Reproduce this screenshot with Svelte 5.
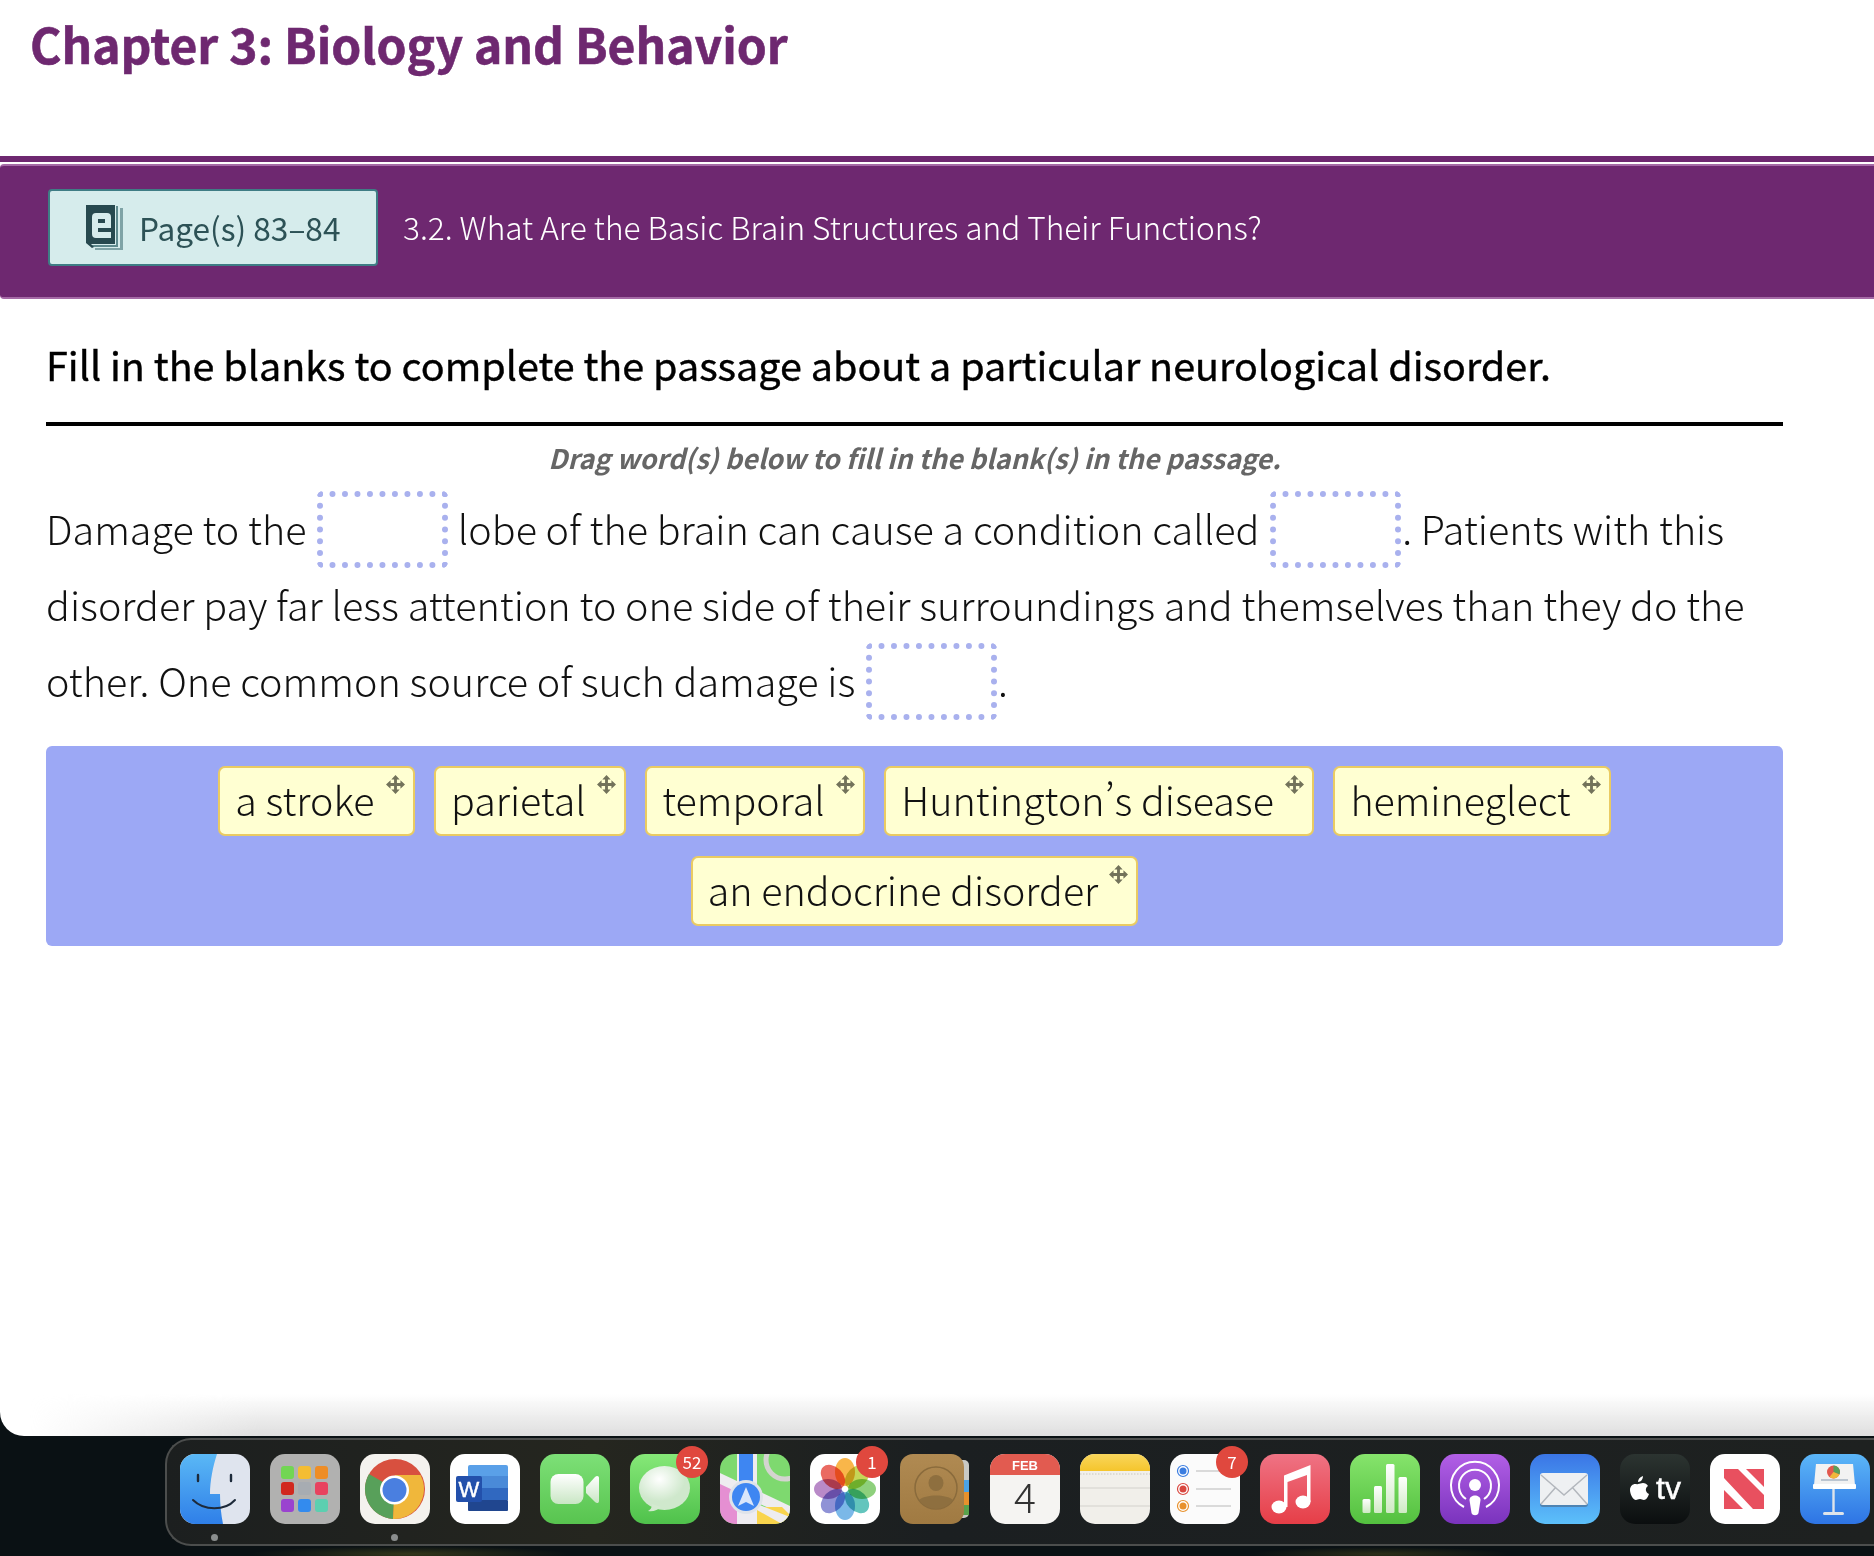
<script>
  const chips = [
    'a stroke',
    'parietal',
    'temporal',
    'Huntington’s disease',
    'hemineglect',
    'an endocrine disorder'
  ]
</script>

{#snippet move()}
  <svg class="move" viewBox="0 0 20 20" aria-hidden="true">
    <path d="M10 0l4.400 4.800h-2.900V8.500h3.700V5.600L20 10l-4.800 4.400v-2.900h-3.700v3.700h2.900L10 20l-4.400-4.800h2.900v-3.700H4.800v2.900L0 10l4.800-4.400v2.900h3.700V4.800H5.600z" />
  </svg>
{/snippet}

<div class="window">
  <h1>Chapter 3: Biology and Behavior</h1>
  <div class="rule"></div>
  <div class="banner">
    <div class="pages">
      <svg class="book" viewBox="0 0 37 46" aria-hidden="true">
        <path d="M30 1h2v41H6v-2h24z" fill="#5f8a8e" />
        <path d="M34 3h3v42H9v-2h25z" fill="#7fa3a6" />
        <path d="M0 0h29v39H5l3 3-2 1-6-5z" fill="#27494f" />
        <path fill-rule="evenodd" d="M6 12a4 4 0 0 1 4-4h11a4 4 0 0 1 4 4v11H12v4h13v6H10a4 4 0 0 1-4-4zM12 14v4h7v-4z" fill="#d6ecec" />
      </svg>
      <span>Page(s) 83–84</span>
    </div>
    <span class="section">3.2. What Are the Basic Brain Structures and Their Functions?</span>
  </div>

  <div class="content">
    <h2>Fill in the blanks to complete the passage about a particular neurological disorder.</h2>
    <p class="hint">Drag word(s) below to fill in the blank(s) in the passage.</p>
    <p class="passage">Damage to the <span class="blank"></span> lobe of the brain can cause a condition called <span class="blank"></span>. Patients with this disorder pay far less attention to one side of their surroundings and themselves than they do the other. One common source of such damage is <span class="blank"></span>.</p>
    <div class="pool">
      {#each chips as chip}
        <div class="chip"><span>{chip}</span>{@render move()}</div>
      {/each}
    </div>
  </div>
</div>

<div class="dock">
  <div class="app">
    <svg viewBox="0 0 70 70">
      <defs>
        <linearGradient id="fb" x1="0" y1="0" x2="0" y2="1"><stop offset="0" stop-color="#5ab8f6" /><stop offset="1" stop-color="#2f7fe8" /></linearGradient>
      </defs>
      <rect width="70" height="70" rx="15" fill="#dfe4ee" />
      <path d="M15 0h22c-4 12-7 27-7 40h10c0 10 1 20 3 30H15C7 70 0 63 0 55V15C0 7 7 0 15 0z" fill="url(#fb)" />
      <path d="M18 21v6M51 21v6" stroke="#1d2a3a" stroke-width="2.400" stroke-linecap="round" />
      <path d="M13 46c11 11 32 11 42 0" fill="none" stroke="#1d2a3a" stroke-width="2" stroke-linecap="round" />
    </svg>
  </div>
  <div class="app">
    <svg viewBox="0 0 70 70">
      <rect width="70" height="70" rx="15" fill="#b1b1b0" />
      <rect x="11" y="12" width="13" height="13" rx="3" fill="#72d653" />
      <rect x="28" y="12" width="13" height="13" rx="3" fill="#f4bd32" />
      <rect x="45" y="12" width="13" height="13" rx="3" fill="#ee8d26" />
      <rect x="11" y="28" width="13" height="13" rx="3" fill="#d1291f" />
      <rect x="28" y="28" width="13" height="13" rx="3" fill="#a7acb2" />
      <rect x="45" y="28" width="13" height="13" rx="3" fill="#e8425f" />
      <rect x="11" y="45" width="13" height="13" rx="3" fill="#9a43cf" />
      <rect x="28" y="45" width="13" height="13" rx="3" fill="#338bee" />
      <rect x="45" y="45" width="13" height="13" rx="3" fill="#5ccfb0" />
    </svg>
  </div>
  <div class="app">
    <svg viewBox="0 0 70 70">
      <rect width="70" height="70" rx="15" fill="#f4f2ee" />
      <circle cx="35" cy="35" r="30" fill="#d8503f" />
      <path d="M35 35L9 20A30 30 0 0 0 33 65z" fill="#58a05a" />
      <path d="M35 21h25.500A30 30 0 0 1 33 65z" fill="#f0b73b" />
      <circle cx="34.500" cy="36" r="14.500" fill="#fff" />
      <circle cx="34.500" cy="36" r="12" fill="#4a7fe0" />
    </svg>
  </div>
  <div class="app">
    <svg viewBox="0 0 70 70">
      <rect width="70" height="70" rx="15" fill="#fff" />
      <rect x="18" y="11" width="40" height="13" rx="2" fill="#5aa0e8" />
      <rect x="18" y="22" width="40" height="12" fill="#4a8ad8" />
      <rect x="18" y="34" width="40" height="12" fill="#3068c0" />
      <rect x="18" y="46" width="40" height="11" rx="1" fill="#20468f" />
      <rect x="6" y="22" width="26" height="26" rx="2" fill="#2350ab" />
      <text x="19" y="43" text-anchor="middle" class="w">W</text>
    </svg>
  </div>
  <div class="app">
    <svg viewBox="0 0 70 70">
      <defs>
        <linearGradient id="fg" x1="0" y1="0" x2="0" y2="1"><stop offset="0" stop-color="#7de077" /><stop offset="1" stop-color="#58c44f" /></linearGradient>
        <linearGradient id="fw" x1="0" y1="0" x2="0" y2="1"><stop offset="0" stop-color="#fff" /><stop offset="1" stop-color="#c9e6c4" /></linearGradient>
      </defs>
      <rect width="70" height="70" rx="15" fill="url(#fg)" />
      <rect x="10.500" y="20" width="33" height="30" rx="8" fill="url(#fw)" />
      <path d="M46 33l9-10c2-2 4-1 4 1v23c0 2-2 3-4 1l-9-9z" fill="url(#fw)" />
    </svg>
  </div>
  <div class="app">
    <svg viewBox="0 0 70 70">
      <defs>
        <linearGradient id="mg" x1="0" y1="0" x2="0" y2="1"><stop offset="0" stop-color="#86e878" /><stop offset="1" stop-color="#4fc14b" /></linearGradient>
        <radialGradient id="mw" cx="0.4" cy="0.3"><stop offset="0" stop-color="#fff" /><stop offset="1" stop-color="#cfe8cc" /></radialGradient>
      </defs>
      <rect width="70" height="70" rx="15" fill="url(#mg)" />
      <ellipse cx="34.500" cy="34" rx="25.500" ry="22" fill="url(#mw)" />
      <path d="M22 50c0 4-2 6-4 7 5 1 10-1 13-4z" fill="#d4ead0" />
    </svg>
    <b class="badge">52</b>
  </div>
  <div class="app">
    <svg viewBox="0 0 70 70">
      <defs><clipPath id="mc"><rect width="70" height="70" rx="15" /></clipPath></defs>
      <g clip-path="url(#mc)">
        <rect width="70" height="70" fill="#7ed96f" />
        <path d="M0 19L70 52V63L0 33z" fill="#eeecf0" />
        <path d="M0 30l17 8v32H0z" fill="#e58fd2" />
        <path d="M37 53h25l8 8v9H37z" fill="#f9d44d" />
        <path d="M37 50L70 63V70H62L37 56z" fill="#eeecf0" />
        <rect x="17" y="0" width="20" height="70" fill="#eeecf0" />
        <rect x="19" y="0" width="14" height="32" fill="#3e86f2" />
        <circle cx="65" cy="6" r="19" fill="none" stroke="#d4d4d0" stroke-width="5" />
        <circle cx="26" cy="43" r="17" fill="#dfe3ea" />
        <circle cx="26" cy="43" r="14" fill="#3e86f2" />
        <path d="M26 33l8 19-8-4-8 4z" fill="#d9e6fb" />
      </g>
    </svg>
  </div>
  <div class="app">
    <svg viewBox="0 0 70 70">
      <rect width="70" height="70" rx="15" fill="#fff" />
      <g transform="translate(35 35)">
        <ellipse class="petal" cy="-17" rx="10" ry="14" fill="#f9b64a" />
        <ellipse class="petal" cy="-17" rx="10" ry="14" fill="#c6d658" transform="rotate(45)" />
        <ellipse class="petal" cy="-17" rx="10" ry="14" fill="#8ed07c" transform="rotate(90)" />
        <ellipse class="petal" cy="-17" rx="10" ry="14" fill="#63c5bd" transform="rotate(135)" />
        <ellipse class="petal" cy="-17" rx="10" ry="14" fill="#7bb8e8" transform="rotate(180)" />
        <ellipse class="petal" cy="-17" rx="10" ry="14" fill="#8f92d6" transform="rotate(225)" />
        <ellipse class="petal" cy="-17" rx="10" ry="14" fill="#b98ac8" transform="rotate(270)" />
        <ellipse class="petal" cy="-17" rx="10" ry="14" fill="#ea6a62" transform="rotate(315)" />
        <circle r="1.200" fill="#fff" />
      </g>
    </svg>
    <b class="badge">1</b>
  </div>
  <div class="app">
    <svg viewBox="0 0 70 70">
      <defs>
        <linearGradient id="cb" x1="0" y1="0" x2="0" y2="1"><stop offset="0" stop-color="#b08a52" /><stop offset="1" stop-color="#a07a42" /></linearGradient>
      </defs>
      <rect x="50" y="6" width="19" height="58" rx="5" fill="#c9c9c4" />
      <rect x="63" y="26" width="6" height="12" fill="#4aa3e6" />
      <rect x="63" y="38" width="6" height="13" fill="#e8912c" />
      <rect x="63" y="51" width="6" height="10" fill="#5aa24c" />
      <rect width="64" height="70" rx="13" fill="url(#cb)" />
      <circle cx="36" cy="34" r="21" fill="none" stroke="#8a6b3c" stroke-width="1.500" />
      <ellipse cx="36" cy="29" rx="7.500" ry="8" fill="#8e6f3f" />
      <path d="M19 46c6-6 28-6 34 0a21 21 0 0 1-34 0z" fill="#8e6f3f" />
    </svg>
  </div>
  <div class="app">
    <svg viewBox="0 0 70 70">
      <defs><clipPath id="cc"><rect width="70" height="70" rx="15" /></clipPath></defs>
      <g clip-path="url(#cc)">
        <rect width="70" height="70" fill="#f5f4f2" />
        <rect width="70" height="21" fill="#e25b50" />
      </g>
      <text x="35" y="16" text-anchor="middle" class="feb">FEB</text>
      <text x="35" y="59" text-anchor="middle" class="day">4</text>
    </svg>
  </div>
  <div class="app">
    <svg viewBox="0 0 70 70">
      <defs>
        <clipPath id="nc"><rect width="70" height="70" rx="15" /></clipPath>
        <linearGradient id="ny" x1="0" y1="0" x2="0" y2="1"><stop offset="0" stop-color="#f9d65c" /><stop offset="1" stop-color="#f5c52c" /></linearGradient>
      </defs>
      <g clip-path="url(#nc)">
        <rect width="70" height="70" fill="#f1efea" />
        <rect width="70" height="17" fill="url(#ny)" />
        <path d="M0 20h70" stroke="#c9c7c0" stroke-dasharray="1.500 1.500" />
        <path d="M0 34h70M0 52h70" stroke="#d3d1cc" />
      </g>
    </svg>
  </div>
  <div class="app">
    <svg viewBox="0 0 70 70">
      <rect width="70" height="70" rx="15" fill="#fbfbfb" />
      <circle cx="13" cy="17" r="5.500" fill="#fff" stroke="#3b7de0" stroke-width="1.200" />
      <circle cx="13" cy="17" r="3.500" fill="#3b7de0" />
      <circle cx="13" cy="35" r="5.500" fill="#fff" stroke="#d9473f" stroke-width="1.200" />
      <circle cx="13" cy="35" r="3.500" fill="#d9473f" />
      <circle cx="13" cy="52" r="5.500" fill="#fff" stroke="#e8912c" stroke-width="1.200" />
      <circle cx="13" cy="52" r="3.500" fill="#e8912c" />
      <path d="M26 17h35M26 35h35M26 52h35" stroke="#b9b9b9" stroke-width="1.200" />
    </svg>
    <b class="badge">7</b>
  </div>
  <div class="app">
    <svg viewBox="0 0 70 70">
      <defs><linearGradient id="mu" x1="0" y1="0" x2="0" y2="1"><stop offset="0" stop-color="#ef7384" /><stop offset="1" stop-color="#e63e47" /></linearGradient></defs>
      <rect width="70" height="70" rx="15" fill="url(#mu)" />
      <path d="M24 21.500L50.500 11V48h-3.500V21L27.500 28V53H24z" fill="#fff" />
      <ellipse cx="19" cy="53" rx="7.500" ry="6.500" fill="#fff" />
      <ellipse cx="43" cy="48" rx="7.500" ry="6.500" fill="#fff" />
    </svg>
  </div>
  <div class="app">
    <svg viewBox="0 0 70 70">
      <defs>
        <linearGradient id="ng" x1="0" y1="0" x2="0" y2="1"><stop offset="0" stop-color="#86e46c" /><stop offset="1" stop-color="#53c03f" /></linearGradient>
        <linearGradient id="nb" x1="0" y1="0" x2="0" y2="1"><stop offset="0" stop-color="#fff" /><stop offset="1" stop-color="#cfeac4" /></linearGradient>
      </defs>
      <rect width="70" height="70" rx="15" fill="url(#ng)" />
      <rect x="12.500" y="45" width="8" height="14" rx="1.500" fill="url(#nb)" />
      <rect x="24" y="32" width="8" height="27" rx="1.500" fill="url(#nb)" />
      <rect x="36" y="10" width="8.500" height="49" rx="1.500" fill="url(#nb)" />
      <rect x="48.500" y="23" width="8.500" height="36" rx="1.500" fill="url(#nb)" />
    </svg>
  </div>
  <div class="app">
    <svg viewBox="0 0 70 70">
      <defs><linearGradient id="pg" x1="0" y1="0" x2="0" y2="1"><stop offset="0" stop-color="#b25fe6" /><stop offset="1" stop-color="#7a33bd" /></linearGradient></defs>
      <rect width="70" height="70" rx="15" fill="url(#pg)" />
      <path d="M24 53a24 24 0 1 1 22 0" fill="none" stroke="#fff" stroke-width="2" />
      <path d="M26 45a16 16 0 1 1 18 0" fill="none" stroke="#fff" stroke-width="2" />
      <circle cx="35" cy="31" r="6" fill="#fff" />
      <path d="M29.500 46c0-6 11-6 11 0l-2 13c-1 3-6 3-7 0z" fill="#fff" />
    </svg>
  </div>
  <div class="app">
    <svg viewBox="0 0 70 70">
      <defs><linearGradient id="ml" x1="0" y1="0" x2="0" y2="1"><stop offset="0" stop-color="#3a75e6" /><stop offset="1" stop-color="#5cc0fa" /></linearGradient></defs>
      <rect width="70" height="70" rx="15" fill="url(#ml)" />
      <rect x="10" y="20" width="48" height="33" rx="3" fill="#4a5a70" opacity="0.5" />
      <rect x="10" y="19" width="48" height="32" rx="3" fill="#eef0f2" />
      <path d="M11 21l23 20 23-20M11 50l15-17M57 50L42 33" fill="none" stroke="#b3b7bd" stroke-width="1.500" />
    </svg>
  </div>
  <div class="app">
    <svg viewBox="0 0 70 70">
      <defs><linearGradient id="tv" x1="0" y1="0" x2="0" y2="1"><stop offset="0" stop-color="#2c3431" /><stop offset="1" stop-color="#0b0e0f" /></linearGradient></defs>
      <rect width="70" height="70" rx="15" fill="url(#tv)" />
      <path transform="translate(-2 0)" d="M20 30c2 0 3-1 5-1 2 0 4 1 5 3-3 2-3 6 1 8-1 3-3 6-5 6-2 0-2-1-4-1s-3 1-4 1c-3 0-6-6-6-10 0-4 3-6 5-6 1 0 2 .500 3 0zM20 28c0-3 2-5 5-6 0 3-2 6-5 6z" fill="#fff" />
      <text x="48.500" y="45" text-anchor="middle" class="tv">tv</text>
    </svg>
  </div>
  <div class="app">
    <svg viewBox="0 0 70 70">
      <rect width="70" height="70" rx="15" fill="#fff" />
      <path d="M14 15H28L54 41V55H43L14 24zM36 15H54V33zM14 36L33 55H14z" fill="#e8505f" />
    </svg>
  </div>
  <div class="app">
    <svg viewBox="0 0 70 70">
      <defs><linearGradient id="kn" x1="0" y1="0" x2="0" y2="1"><stop offset="0" stop-color="#5bb6f8" /><stop offset="1" stop-color="#2e74e4" /></linearGradient></defs>
      <rect width="70" height="70" rx="15" fill="url(#kn)" />
      <path d="M16 10h37l2 21H14z" fill="#f2f2f2" />
      <rect x="13" y="30" width="43" height="5" rx="1" fill="#fff" />
      <path d="M21 26h27" stroke="#a9b6c4" stroke-width="1.500" />
      <circle cx="33.500" cy="18" r="6.500" fill="#e2584e" />
      <path d="M33.500 18V11.500A6.500 6.500 0 0 1 39.500 20.500z" fill="#58a05a" />
      <path d="M33.500 18l6 2.500a6.500 6.500 0 0 1-10 2.500z" fill="#f0b73b" />
      <rect x="32.300" y="35" width="2.400" height="23" fill="#dfe4ea" />
      <rect x="23" y="58" width="21" height="3" rx="1.500" fill="#dfe4ea" />
    </svg>
  </div>
  <i class="dot d1"></i>
  <i class="dot d2"></i>
</div>

<style>
  :global(body) {
    margin: 0;
    width: 1874px;
    height: 1556px;
    overflow: hidden;
    background:
      radial-gradient(ellipse 160px 8px at 410px 1554px, #33361a, transparent),
      radial-gradient(ellipse 130px 7px at 1380px 1554px, #2c2f18, transparent),
      #0a1114;
    font-family: "Noto Sans CJK SC", "Noto Sans", sans-serif;
    font-variant-east-asian: proportional-width;
  }

  .window {
    position: relative;
    height: 1436px;
    overflow: hidden;
    background: #fff;
    border-radius: 0 0 0 24px;
  }

  .window::after {
    content: '';
    position: absolute;
    left: 0;
    right: 0;
    bottom: 0;
    height: 42px;
    background: linear-gradient(#dedede00, #dedede);
    mask-image: linear-gradient(90deg, transparent 30px, #000 260px);
  }

  h1 {
    margin: 0;
    padding: 9px 0 0 30px;
    height: 156px;
    box-sizing: border-box;
    font-size: 48px;
    line-height: 68px;
    font-weight: 700;
    color: #6e2870;
    -webkit-text-stroke: 0.6px #6e2870;
  }

  .rule {
    height: 6px;
    background: #6e2870;
  }

  .banner {
    margin-top: 2px;
    height: 135px;
    box-sizing: border-box;
    display: flex;
    align-items: center;
    gap: 25px;
    padding: 0 0 8px 48px;
    background: #6e2870;
    border-top: 2px solid #a56aa6;
    border-bottom: 2px solid #a56aa6;
    border-radius: 4px 0 0 4px;
    color: #fff;
  }

  .pages {
    box-sizing: border-box;
    width: 330px;
    height: 77px;
    display: flex;
    align-items: center;
    gap: 16px;
    padding-left: 36px;
    background: #d6ecec;
    border: 2px solid #3f7d85;
    border-radius: 4px;
    color: #2d5256;
    font-size: 31.6px;
    font-weight: 400;
  }

  .pages span {
    padding-bottom: 2px;
  }

  .book {
    width: 37px;
    height: 46px;
    flex: none;
  }

  .section {
    padding-bottom: 4px;
    font-size: 31.6px;
    font-weight: 300;
  }

  .content {
    padding: 0 91px 0 46px;
  }

  h2 {
    margin: 0;
    padding: 38px 0 31px;
    border-bottom: 4px solid #000;
    font-size: 39.5px;
    line-height: 54px;
    font-weight: 400;
    color: #000;
    -webkit-text-stroke: 0.4px #000;
  }

  .hint {
    margin: 0;
    padding-top: 12px;
    text-align: center;
    font-size: 26.9px;
    line-height: 40px;
    font-weight: 700;
    font-style: italic;
    color: #666;
  }

  .passage {
    margin: 0;
    padding-top: 12px;
    font-size: 39.5px;
    line-height: 76px;
    font-weight: 300;
    color: #111;
  }

  .blank {
    display: inline-block;
    box-sizing: border-box;
    width: 131px;
    height: 77px;
    vertical-align: middle;
    border: 6px dotted #a9b1ee;
    border-radius: 6px;
    margin: -15px 1px -5px 2px;
  }

  .pool {
    margin-top: 28px;
    box-sizing: border-box;
    height: 200px;
    padding: 20px 0;
    display: flex;
    flex-wrap: wrap;
    justify-content: center;
    align-content: flex-start;
    gap: 20px 19.5px;
    background: #9ca8f5;
    border-radius: 6px;
  }

  .chip {
    box-sizing: border-box;
    height: 70px;
    display: flex;
    align-items: flex-start;
    gap: 11px;
    padding: 0 8px 0 15px;
    background: #ffffd2;
    border: 2.5px solid #eacb62;
    border-radius: 7px;
    font-size: 39.4px;
    line-height: 62px;
    font-weight: 300;
    color: #111;
  }

  .move {
    width: 19px;
    height: 19px;
    margin-top: 7px;
    fill: #72725a;
  }

  .dock {
    position: relative;
    margin: 2px 0 0 165px;
    height: 108px;
    box-sizing: border-box;
    display: flex;
    gap: 20px;
    padding: 14px 0 0 13px;
    background: linear-gradient(90deg, #1c1f1f, #25261f 25%, #1b1f21 45%, #1e2120);
    border: 2px solid #4c4e4d;
    border-right: none;
    border-radius: 26px 0 0 26px;
  }

  .app {
    position: relative;
    flex: none;
    width: 70px;
    height: 70px;
  }

  .app svg {
    display: block;
    width: 70px;
    height: 70px;
  }

  .petal {
    mix-blend-mode: multiply;
  }

  .badge {
    position: absolute;
    top: -8px;
    right: -8px;
    width: 32px;
    height: 32px;
    border-radius: 50%;
    background: #e0483e;
    color: #fff;
    font-size: 17px;
    line-height: 32px;
    font-weight: 400;
    text-align: center;
  }

  .dot {
    position: absolute;
    top: 94px;
    width: 7px;
    height: 7px;
    border-radius: 50%;
    background: #8a8d8d;
  }
  .d1 { left: 44px; }
  .d2 { left: 224px; }

  .w {
    font-family: "Liberation Sans", sans-serif;
    font-size: 22px;
    fill: #fff;
    stroke: #fff;
    stroke-width: 0.4;
  }

  .feb {
    font-family: "Liberation Sans", sans-serif;
    font-size: 13px;
    font-weight: 700;
    fill: #fff;
  }

  .day {
    font-size: 41px;
    font-weight: 300;
    fill: #333;
  }

  .tv {
    font-family: "Liberation Sans", sans-serif;
    font-size: 32px;
    fill: #fff;
    stroke: #fff;
    stroke-width: 0.5;
  }
</style>
